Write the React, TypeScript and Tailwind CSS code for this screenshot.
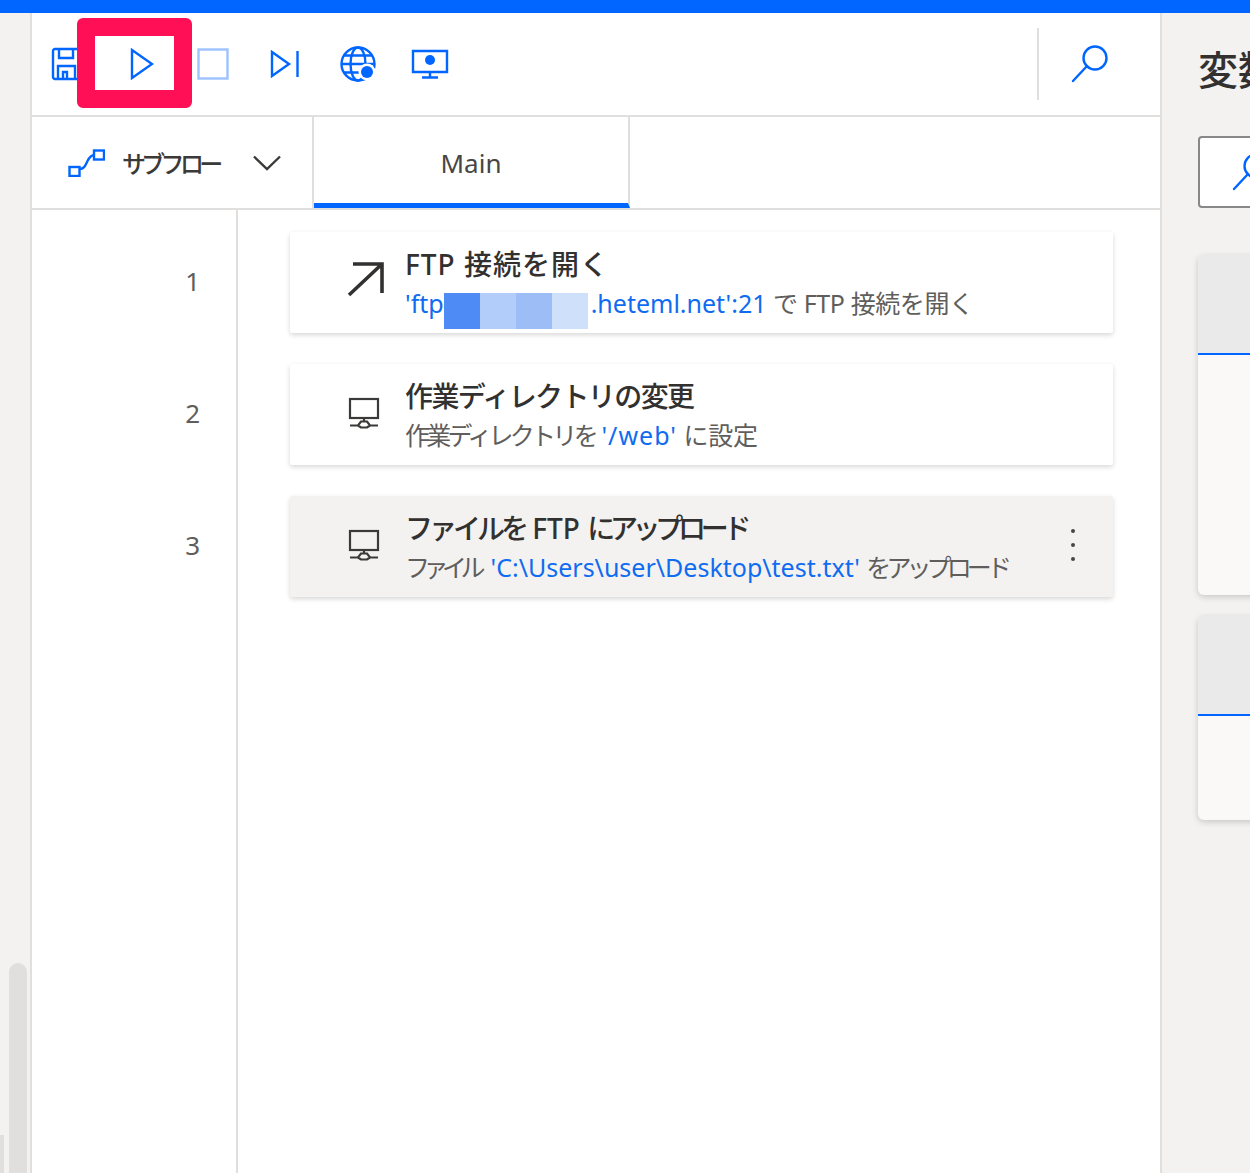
const blue = "#0066ff"

function ToolIcon({ w, h, className, children }: { w: number; h: number; className?: string; children: React.ReactNode }) {
  return (
    <svg width={w} height={h} viewBox={`0 0 ${w} ${h}`} fill="none" stroke={blue} strokeWidth="2.4" className={className}>
      {children}
    </svg>
  )
}

function Monitor() {
  return (
    <svg width="34" height="32" viewBox="0 0 34 32" fill="none" stroke="#3b3a39" strokeWidth="2.2" className="mb-[4px] shrink-0">
      <rect x="2" y="2" width="28" height="19" />
      <path d="M16 21v3M2 28.5h8l3-4h6l3 4h8M10 28.5l3 2h6l3-2" />
    </svg>
  )
}

function ArrowOut() {
  return (
    <svg width="38" height="36" viewBox="0 0 38 36" fill="none" stroke="#323130" strokeWidth="3.6" className="mb-[8px] ml-[-1px] shrink-0">
      <path d="M2 34 35 3M6 3h29v29" />
    </svg>
  )
}

function ActionCard({ icon, title, active, children }: { icon: React.ReactNode; title: React.ReactNode; active?: boolean; children: React.ReactNode }) {
  return (
    <div
      className={`flex h-[101px] items-center rounded-[2px] pl-[58px] pr-[38px] shadow-[0_2px_5px_rgba(0,0,0,0.16)] ${active ? "bg-[#f3f2f1]" : "bg-white"}`}
    >
      <div className="flex w-[58px] shrink-0 items-center">{icon}</div>
      <div className="ml-[-1px] min-w-0 flex-1">
        <div className="text-[28px] font-medium leading-[40px] text-[#323130] whitespace-nowrap">{title}</div>
        <div className="mt-[1px] text-[25px] leading-[36px] text-[#605e5c] whitespace-nowrap">{children}</div>
      </div>
      {active && (
        <div className="mb-[4px] flex flex-col gap-[10px]">
          <span className="h-[4px] w-[4px] rounded-full bg-[#484644]" />
          <span className="h-[4px] w-[4px] rounded-full bg-[#484644]" />
          <span className="h-[4px] w-[4px] rounded-full bg-[#484644]" />
        </div>
      )}
    </div>
  )
}

function SidePanel({ height }: { height: string }) {
  return (
    <div className={`flex flex-col overflow-hidden rounded-[6px] bg-[#faf9f8] shadow-[0_2px_6px_rgba(0,0,0,0.18)] ${height}`}>
      <div className="h-[100px] border-b-2 border-[#0066ff] bg-[#ebeaea]" />
    </div>
  )
}

export default function App() {
  return (
    <div className="flex h-[1173px] w-[1250px] flex-col overflow-hidden bg-white font-['Noto_Sans','Noto_Sans_CJK_JP',sans-serif]">
      <div className="h-[13px] shrink-0 bg-[#0066ff]" />
      <div className="flex min-h-0 flex-1">
        {/* left rail */}
        <div className="flex w-[32px] shrink-0 items-end gap-[5px] border-r-2 border-[#e1dfdd] bg-[#f3f2f1]">
          <div className="h-[38px] w-[4px] bg-[#e1dfdd]" />
          <div className="h-[210px] w-[18px] rounded-t-[9px] bg-[#e1dfdd]" />
        </div>

        {/* designer */}
        <div className="flex w-[1128px] shrink-0 flex-col">
          <div className="relative flex h-[104px] shrink-0 items-center border-b-2 border-[#e1dfdd] pl-[19px] pr-[51px]">
            <ToolIcon w={32} h={34}>
              <path d="M2 4a2 2 0 0 1 2-2h22l4 4v24a2 2 0 0 1-2 2H4a2 2 0 0 1-2-2z" />
              <path d="M8 2v9h14V2M7 32V19h17v13M12 32v-7h4v7" />
            </ToolIcon>
            <ToolIcon w={24} h={32} className="ml-[47px]">
              <path d="M2 2v28l20-14z" />
            </ToolIcon>
            <svg width="32" height="32" viewBox="0 0 32 32" fill="none" stroke="#9cc3ff" strokeWidth="2.4" className="ml-[43px]">
              <rect x="1.5" y="1.5" width="29" height="29" />
            </svg>
            <ToolIcon w={30} h={28} className="ml-[41px]">
              <path d="M2 2v24l17-12zM27.5 1v26" />
            </ToolIcon>
            <ToolIcon w={38} h={38} className="ml-[39px]">
              <circle cx="19" cy="19" r="16.5" />
              <ellipse cx="19" cy="19" rx="7.5" ry="16.5" />
              <path d="M2.5 19h33M5 10.5h28M5 27.5h28" />
              <circle cx="28" cy="27" r="8.5" fill="#fff" stroke="none" />
              <circle cx="28" cy="27" r="6" fill={blue} stroke="none" />
            </ToolIcon>
            <ToolIcon w={38} h={30} className="ml-[34px]">
              <path d="M2 2h34v21H2zM19 23v5M11 28.5h16M1 23h36" />
              <circle cx="19" cy="11" r="5" fill={blue} stroke="none" />
            </ToolIcon>
            <div className="ml-auto h-[72px] w-[2px] bg-[#e1dfdd]" />
            <ToolIcon w={38} h={38} className="ml-[32px]">
              <circle cx="24" cy="13" r="11.5" />
              <path d="M16 21 2 36" strokeLinecap="round" />
            </ToolIcon>

            {/* highlight */}
            <div className="absolute left-[45px] top-[5px] h-[90px] w-[115px] rounded-[6px] border-[18px] border-[#ff0f55]" />
          </div>

          <div className="flex h-[93px] shrink-0 border-b-2 border-[#e1dfdd]">
            <div className="flex w-[282px] shrink-0 items-center border-r-2 border-[#e1dfdd] pl-[36px]">
              <ToolIcon w={37} h={28}>
                <rect x="1.5" y="18" width="10" height="9" />
                <rect x="26" y="1.5" width="10" height="9" />
                <path d="M11.5 20c5 0 6-4 8-8 1.500-3 3-5.500 6.500-6" />
              </ToolIcon>
              <span className="ml-[17px] w-[112px] pt-[2px] text-[24px] font-medium tracking-[-4.7px] text-[#3b3a39] whitespace-nowrap">サブフロー</span>
              <svg width="28" height="16" viewBox="0 0 28 16" fill="none" stroke="#3b3a39" strokeWidth="2.4" className="ml-[19px]">
                <path d="M1 1.500 14 14 27 1.500" />
              </svg>
            </div>
            <div className="flex w-[316px] shrink-0 items-center justify-center border-b-[5px] border-r-2 border-b-[#0066ff] border-r-[#e1dfdd] pt-[7px] text-[26px] text-[#484644]">
              Main
            </div>
          </div>

          <div className="flex min-h-0 flex-1">
            <div className="flex w-[206px] shrink-0 flex-col gap-[31px] border-r-2 border-[#e1dfdd] pr-[36px] pt-[21px] text-[26px] text-[#605e5c]">
              <div className="flex h-[101px] items-center justify-end">1</div>
              <div className="flex h-[101px] items-center justify-end">2</div>
              <div className="flex h-[101px] items-center justify-end">3</div>
            </div>
            <div className="flex min-w-0 flex-1 flex-col gap-[31px] pl-[52px] pr-[47px] pt-[22px]">
              <ActionCard icon={<ArrowOut />} title={<span className="tracking-[1px]">FTP 接続を開く</span>}>
                <span className="text-[#0f6cf0]">
                  'ftp
                  <span className="relative top-[5px] my-[-4px] inline-flex h-[36px] w-[144px] align-middle">
                    <span className="flex-1 bg-[#4f8bf5]" />
                    <span className="flex-1 bg-[#b2cdf9]" />
                    <span className="flex-1 bg-[#9dbdf7]" />
                    <span className="flex-1 bg-[#cfe0fb]" />
                  </span>
                  <span className="ml-[3px]">.heteml.net':21</span>
                </span>{" "}
                <span className="tracking-[-0.4px]">で FTP 接続を開く</span>
              </ActionCard>
              <ActionCard icon={<Monitor />} title={<span className="tracking-[-1.6px]">作業ディレクトリの変更</span>}>
                <span className="tracking-[-3.7px]">作業ディレクトリを</span>{" "}
                <span className="tracking-[1px] text-[#0f6cf0]">'/web'</span>{" "}
                <span className="tracking-[-0.2px]">に設定</span>
              </ActionCard>
              <ActionCard
                icon={<Monitor />}
                title={
                  <>
                    <span className="tracking-[-4px]">ファイルを</span>{" "}
                    <span>FTP</span>{" "}
                    <span className="tracking-[-5.3px]">にアップロード</span>
                  </>
                }
                active
              >
                <span className="tracking-[-6.5px]">ファイル</span>{" "}
                <span className="ml-[5px] text-[#0f6cf0]">'C:\Users\user\Desktop\test.txt'</span>{" "}
                <span className="tracking-[-4.9px]">をアップロード</span>
              </ActionCard>
            </div>
          </div>
        </div>

        {/* variables pane */}
        <div className="min-w-0 flex-1 border-l-2 border-[#e1dfdd] bg-[#f3f2f1] pl-[36px]">
          <div className="w-[300px]">
            <div className="flex h-[123px] items-center pb-[10px] text-[40px] font-medium leading-none text-[#323130]">変数</div>
            <div className="flex h-[72px] items-center rounded-[4px] border-2 border-[#8a8886] bg-white pl-[32px]">
              <ToolIcon w={38} h={38}>
                <circle cx="24" cy="13" r="11.500" />
                <path d="M16 21 2 36" strokeLinecap="round" />
              </ToolIcon>
            </div>
            <div className="mt-[47px] flex flex-col gap-[21px]">
              <SidePanel height="h-[340px]" />
              <SidePanel height="h-[204px]" />
            </div>
          </div>
        </div>
      </div>
    </div>
  )
}
